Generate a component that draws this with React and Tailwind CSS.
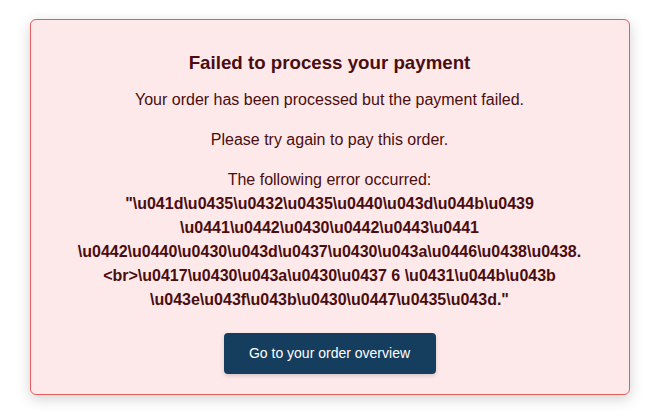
import React from "react";

const errorText =
  '"\\u041d\\u0435\\u0432\\u0435\\u0440\\u043d\\u044b\\u0439 \\u0441\\u0442\\u0430\\u0442\\u0443\\u0441 \\u0442\\u0440\\u0430\\u043d\\u0437\\u0430\\u043a\\u0446\\u0438\\u0438.<br>\\u0417\\u0430\\u043a\\u0430\\u0437 6 \\u0431\\u044b\\u043b \\u043e\\u043f\\u043b\\u0430\\u0447\\u0435\\u043d."';

const App = () => {
  return (
    <div className="min-h-[416px] bg-white pt-[19px] font-['Liberation_Sans',Arial,sans-serif]">
      <div className="mx-auto w-[600px] rounded-md border border-[#e35d5d] bg-[#fde9e9] px-8 pt-[29px] pb-5 text-center text-[#4a0d10] shadow-[0_4px_14px_rgba(0,0,0,0.18)]">
        <h2 className="mb-[11px] text-[18.72px] font-bold leading-[28px]">
          Failed to process your payment
        </h2>
        <p className="mb-4 text-[16px] leading-6">
          Your order has been processed but the payment failed.
        </p>
        <p className="mb-4 text-[16px] leading-6">
          Please try again to pay this order.
        </p>
        <p className="text-[16px] leading-6">
          The following error occurred:
          <br />
          <strong className="font-bold">{errorText}</strong>
        </p>
        <div className="mt-[21px] flex justify-center">
          <button className="h-[41px] w-[212px] rounded-[4px] bg-[#153d5e] text-[14px] text-white shadow-[0_2px_4px_rgba(0,0,0,0.15)]">
            Go to your order overview
          </button>
        </div>
      </div>
    </div>
  );
};

export default App;
